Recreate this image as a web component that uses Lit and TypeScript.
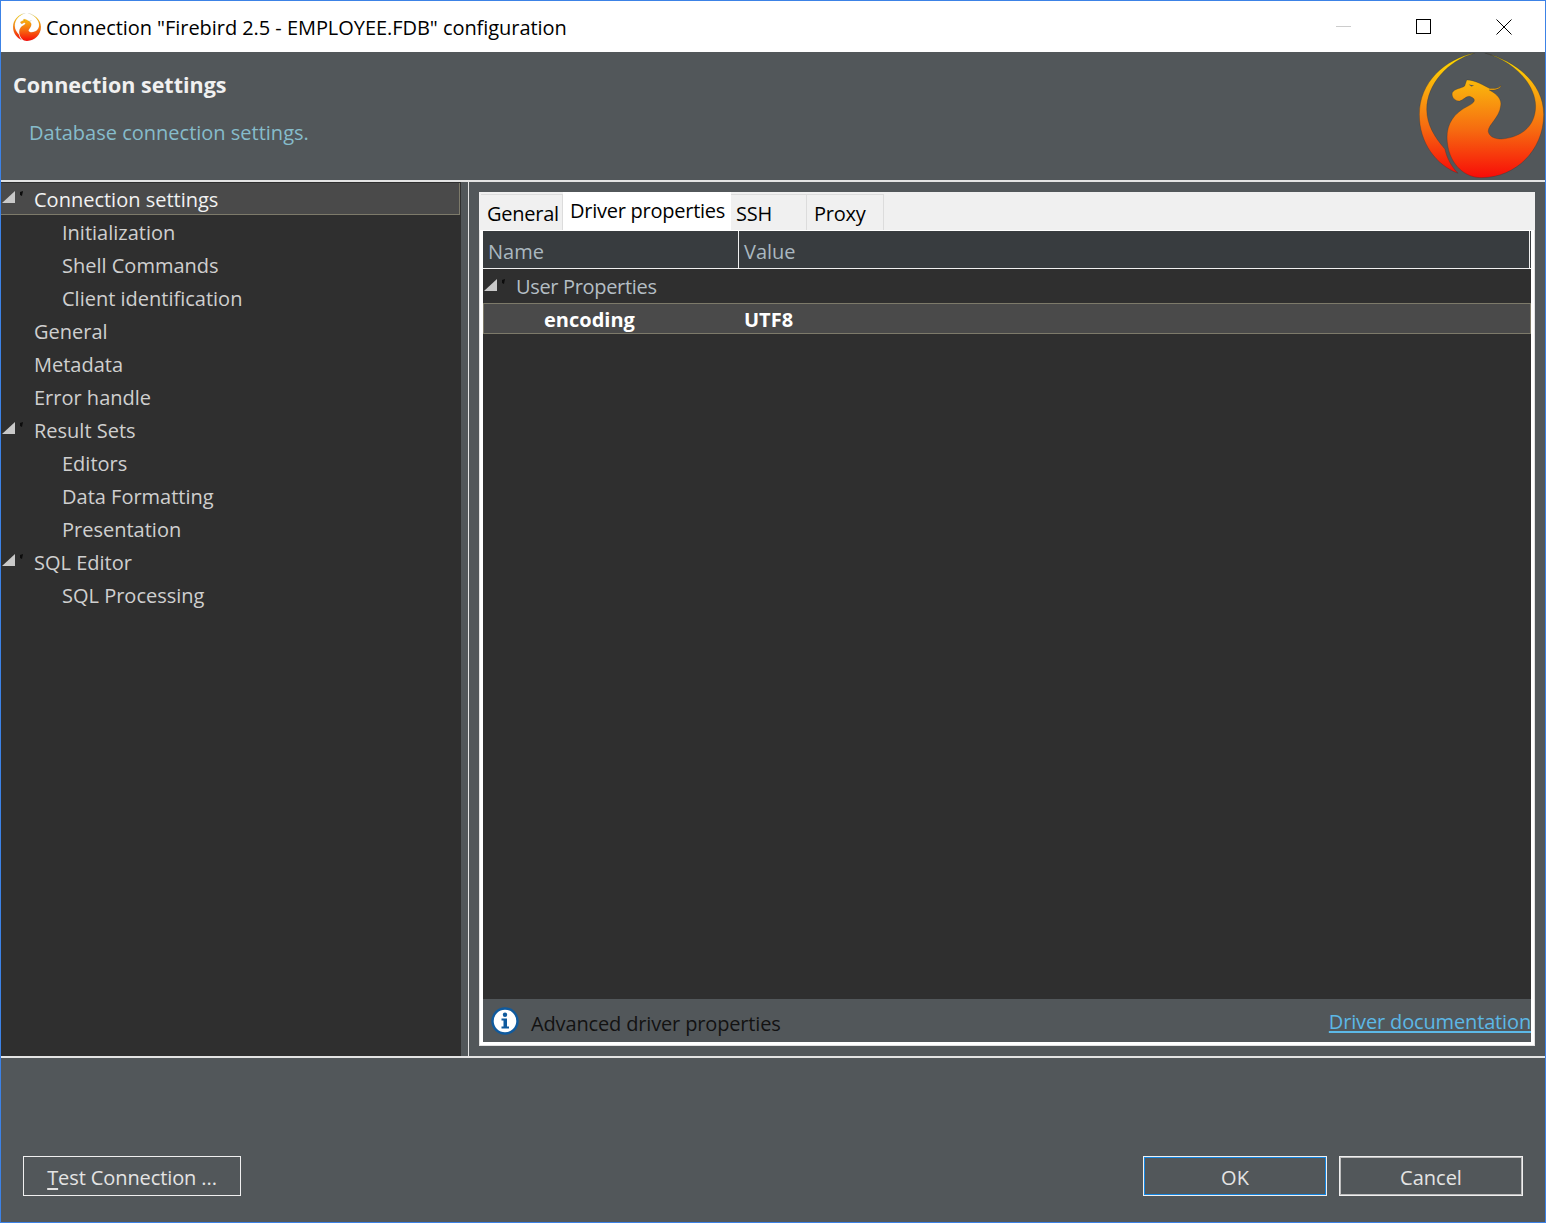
import { LitElement, html, css, svg } from "lit";
import { customElement } from "lit/decorators.js";

const logo = (id: string, cls: string) => html`<svg class=${cls} viewBox="30 12 370 372" aria-hidden="true">
  <defs><linearGradient id=${id} x1="0" y1="0" x2="0" y2="1">
    <stop offset="0" stop-color="#ffe000"/><stop offset=".32" stop-color="#f9a60e"/>
    <stop offset=".62" stop-color="#f66a10"/><stop offset="1" stop-color="#f80c08"/>
  </linearGradient></defs>
  <g fill="url(#${id})" stroke="#2c2a26" stroke-width=".8">
    <path d="M195 12C105 30 30 100 30 195C30 280 80 345 145 370C125 350 112 325 106 298C75 262 52 225 52 180C52 105 115 35 195 12Z"/>
    <path d="M225 12C315 35 400 100 400 195C400 300 318 383 215 383C165 383 125 345 115 290C105 235 125 195 175 170C195 160 200 150 185 143C172 136 165 150 150 155C137 155 125 145 128 130C134 118 155 118 165 110L171 92C195 92 225 110 240 118C255 118 268 118 272 108C274 118 258 124 238 122C262 135 276 150 272 170C268 205 235 225 235 245C238 262 255 268 275 268C340 262 376 225 376 170C376 105 310 35 225 12Z"/>
  </g>
  <path d="M177 106L193 109L185 112Z" fill="#52575a"/>
</svg>`;

const expander = () => svg`<svg class="exp" width="24" height="16" viewBox="0 0 24 16" aria-hidden="true">
  <path d="M0 14L13 14L13 2Z" fill="#c9c9c9"/><path d="M18 3L21 2L20 7L18 6Z" fill="#0c0c0c"/>
</svg>`;

const TREE: [string, number, boolean?][] = [
  ["Connection settings", 0, true],
  ["Initialization", 1], ["Shell Commands", 1], ["Client identification", 1],
  ["General", 0], ["Metadata", 0], ["Error handle", 0],
  ["Result Sets", 0, true],
  ["Editors", 1], ["Data Formatting", 1], ["Presentation", 1],
  ["SQL Editor", 0, true], ["SQL Processing", 1],
];

@customElement("app-root")
export class AppRoot extends LitElement {
  static styles = css`
    :host { display: flex; flex-direction: column; box-sizing: border-box; width: 1546px; height: 1223px;
      border: 1px solid #3c82e6; background: #52575a; overflow: hidden;
      font: 20px/28px "Open Sans", "Noto Sans", sans-serif; color: #d8d8d8; }
    .title { height: 51px; flex: none; background: #fff; color: #000; display: flex; align-items: center; padding-left: 12px; }
    .title .ic { width: 28px; height: 28px; margin-right: 5px; }
    .title span { flex: 1; letter-spacing: -0.05px; padding-top: 2px; }
    .wc { width: 80px; height: 51px; display: flex; align-items: center; justify-content: center; flex: none; }
    .wc svg { display: block; }
    .wc.close { margin-right: 1px; }
    .hdr { height: 128px; flex: none; display: flex; justify-content: space-between; border-bottom: 2px solid #e4e4e4; box-sizing: content-box; }
    .hdr h1 { margin: 19px 0 0 12px; font-size: 21.5px; line-height: 28px; font-weight: 700; color: #f0f0f0; }
    .hdr p { margin: 20px 0 0 28px; color: #86bccb; }
    .hdr .big { width: 125px; height: 125px; margin: 1px 1px 0 0; }
    .main { height: 874px; flex: none; display: flex; border-bottom: 2px solid #e4e4e4; box-sizing: content-box; }
    .tree { width: 460px; flex: none; box-sizing: border-box; background: #2f2f2f; padding-top: 1px; }
    .node { height: 33px; box-sizing: border-box; display: flex; align-items: center; position: relative; color: #cfcfcf; white-space: nowrap; padding-top: 1px; }
    .node.sel { height: 32px; margin: 0 1px 1px 0; background: #4a4a4a; border: 1px solid #7d7a6a; border-width: 0 1px 1px 0; color: #f2f2f2; padding-top: 2px; }
    .exp { position: absolute; left: 1px; top: 6px; }
    .l0 { padding-left: 33px; } .l1 { padding-left: 61px; }
    .sash { width: 7px; flex: none; border-right: 1px solid #e4e4e4; }
    .pane { flex: 1; min-width: 0; padding: 10px 10px 10px 10px; display: flex; }
    .folder { flex: 1; min-width: 0; display: flex; flex-direction: column; }
    .tabs { height: 38px; flex: none; background: #f0f0f0; display: flex; padding-left: 2px; color: #000; align-items: flex-start; letter-spacing: -0.25px; }
    .tab { height: 36px; margin-top: 2px; box-sizing: border-box; border: 1px solid #dcdcdc; border-bottom: 0; border-left: 0; padding: 5px 0 0 6px; white-space: nowrap; }
    .tab.on { height: 38px; margin-top: 0; background: #fff; border: 0; padding: 5px 0 0 7px; }
    .body { flex: 1; min-height: 0; display: flex; flex-direction: column; border: 1px solid #e2e2e2; border-top: 0; }
    .inner { flex: 1; min-height: 0; display: flex; flex-direction: column; border: 3px solid #fff; border-top-width: 1px; background: #2f2f2f; }
    .th { height: 37px; flex: none; display: flex; background: #383c3f; border-bottom: 1px solid #f0f0f0; box-sizing: content-box; color: #aab8c0; line-height: 41px; }
    .th div { box-sizing: border-box; padding-left: 5px; border-right: 1px solid #f0f0f0; }
    .th .n { width: 256px; } .th .v { width: 791px; }
    .group { height: 34px; flex: none; position: relative; display: flex; align-items: center; padding: 2px 0 0 33px; color: #b4bec4; box-sizing: border-box; letter-spacing: -0.33px; }
    .group .exp { top: 8px; }
    .row { height: 31px; flex: none; display: flex; align-items: center; background: #4a4a4a; border: 1px solid #7d7a6a; box-sizing: border-box; color: #fff; font-weight: 700; padding-top: 2px; }
    .row .a { width: 260px; padding-left: 60px; box-sizing: border-box; }
    .grow { flex: 1; }
    .info { height: 43px; flex: none; background: #52575a; display: flex; align-items: center; color: #121212; padding-left: 8px; }
    .info svg { margin-right: 12px; flex: none; }
    .info .t { flex: 1; padding-top: 6px; letter-spacing: -0.15px; }
    .info a { color: #5cb8e6; text-decoration: underline; text-underline-offset: 2px; padding-top: 2px; letter-spacing: -0.15px; }
    .foot { flex: 1; display: flex; align-items: flex-start; padding: 98px 22px 0 22px; gap: 12px; }
    .btn { height: 40px; box-sizing: border-box; width: 184px; border: 1px solid #f0f0f0; display: flex; align-items: center; justify-content: center; color: #e4e4e4; padding-top: 3px; }
    .btn.test { width: 218px; margin-right: auto; letter-spacing: -0.1px; }
    .btn.test u { text-underline-offset: 3px; }
    .btn.ok { box-shadow: inset 0 0 0 1px #1686e0; }
    .btn.cancel { box-shadow: inset 0 0 0 1px #bdbdbd; }
  `;

  render() {
    return html`
      <div class="title">
        ${logo("g1", "ic")}
        <span>Connection "Firebird 2.5 - EMPLOYEE.FDB" configuration</span>
        <div class="wc"><svg width="16" height="16" viewBox="0 0 16 16"><path d="M0 7.5H15" stroke="#cccccc"/></svg></div>
        <div class="wc"><svg width="16" height="16" viewBox="0 0 16 16"><rect x=".5" y=".5" width="14" height="14" fill="none" stroke="#000"/></svg></div>
        <div class="wc close"><svg width="16" height="16" viewBox="0 0 16 16"><path d="M.5.5L15.5 15.5M15.5.5L.5 15.5" stroke="#000" fill="none"/></svg></div>
      </div>
      <div class="hdr">
        <div>
          <h1>Connection settings</h1>
          <p>Database connection settings.</p>
        </div>
        ${logo("g2", "big")}
      </div>
      <div class="main">
        <div class="tree">
          ${TREE.map(([t, l, e], i) => html`<div class="node l${l} ${i === 0 ? "sel" : ""}">${e ? expander() : ""}${t}</div>`)}
        </div>
        <div class="sash"></div>
        <div class="pane">
          <div class="folder">
            <div class="tabs">
              <div class="tab" style="width:82px">General</div>
              <div class="tab on" style="width:168px">Driver properties</div>
              <div class="tab" style="width:76px;padding-left:5px">SSH</div>
              <div class="tab" style="width:77px;padding-left:7px">Proxy</div>
            </div>
            <div class="body"><div class="inner">
              <div class="th"><div class="n">Name</div><div class="v">Value</div></div>
              <div class="group">${expander()}User Properties</div>
              <div class="row"><div class="a">encoding</div><div>UTF8</div></div>
              <div class="grow"></div>
              <div class="info">
                <svg width="28" height="28" viewBox="0 0 28 28" aria-hidden="true">
                  <circle cx="14" cy="14" r="12.5" fill="#fff" stroke="#0f5a9e" stroke-width="2.4"/>
                  <circle cx="14" cy="7.8" r="2.2" fill="#0f5a9e"/>
                  <path d="M10.5 11.5H16V19.5H18V21.5H10.5V19.5H12.5V13.5H10.5Z" fill="#0f5a9e"/>
                </svg>
                <div class="t">Advanced driver properties</div>
                <a>Driver documentation</a>
              </div>
            </div></div>
          </div>
        </div>
      </div>
      <div class="foot">
        <div class="btn test"><span><u>T</u>est Connection ...</span></div>
        <div class="btn ok">OK</div>
        <div class="btn cancel">Cancel</div>
      </div>
    `;
  }
}
